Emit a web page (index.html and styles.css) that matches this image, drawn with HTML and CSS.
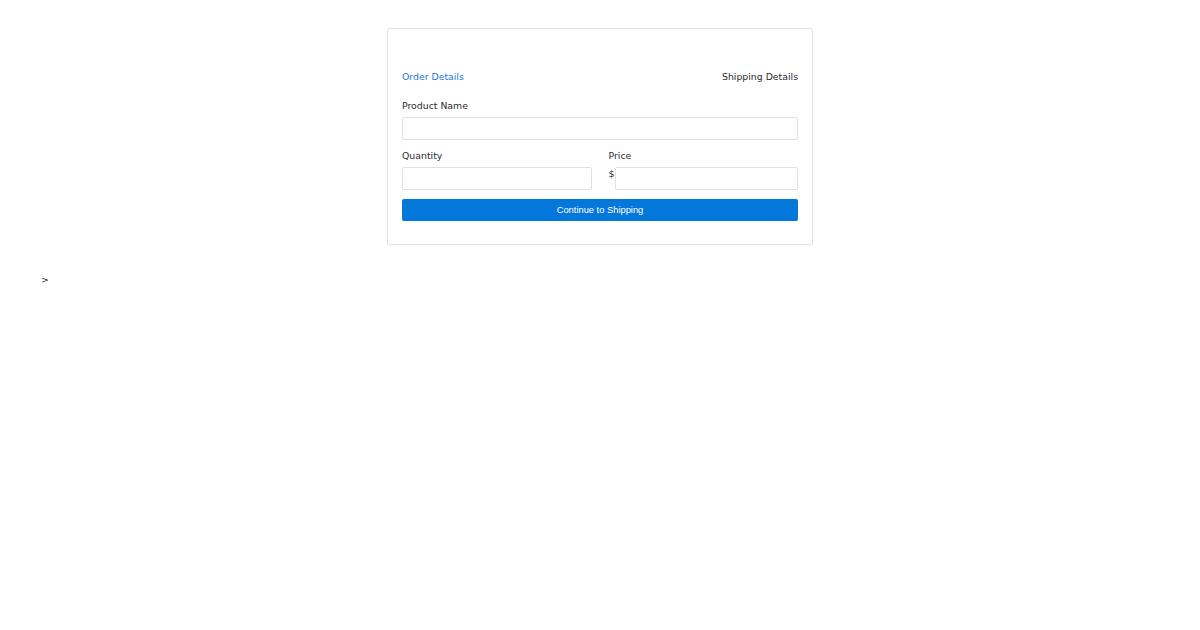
FILE: index.html
```html
<!DOCTYPE html>
<html>
<head>
<meta charset="utf-8">
<link rel="stylesheet" href="styles.css">
</head>
<body>
<div class="page">
  <div class="card">
    <div class="header"></div>
    <div class="tabs">
      <span class="tab active">Order Details</span>
      <span class="tab">Shipping Details</span>
    </div>
    <div class="field">
      <label class="label">Product Name</label>
      <input class="input" type="text">
    </div>
    <div class="row">
      <div class="field col">
        <label class="label">Quantity</label>
        <input class="input" type="text">
      </div>
      <div class="field col">
        <label class="label">Price</label>
        <div class="price">
          <span class="currency">$</span>
          <input class="input" type="text">
        </div>
      </div>
    </div>
    <button class="btn">Continue to Shipping</button>
  </div>
  <div class="tail">&gt;</div>
</div>
</body>
</html>
```
FILE: styles.css
```css
html, body {
  margin: 0;
  padding: 0;
  background: #ffffff;
}
body {
  font-family: "DejaVu Sans", sans-serif;
  font-size: 9.33px;
  line-height: 12px;
  color: #2b2b2b;
}
.page {
  padding-top: 28px;
}
.card {
  box-sizing: border-box;
  width: 426px;
  margin: 0 auto;
  border: 1px solid #e2e2e2;
  border-radius: 2px;
  padding: 14px 14px 23px 14px;
  display: flex;
  flex-direction: column;
}
.header {
  height: 28px;
}
.tabs {
  display: flex;
  justify-content: space-between;
  height: 12px;
  margin-bottom: 17px;
}
.tab.active {
  color: #1a78d6;
}
.field {
  display: flex;
  flex-direction: column;
  margin-bottom: 10px;
}
.row .field {
  margin-bottom: 9px;
}
.label {
  display: block;
  height: 12px;
  margin-bottom: 5px;
}
.input {
  box-sizing: border-box;
  height: 23px;
  width: 100%;
  margin: 0;
  border: 1px solid #e0e0e0;
  border-radius: 2px;
  background: #fff;
  padding: 0 6px;
  font: inherit;
}
.row {
  display: flex;
  gap: 17px;
}
.col {
  flex: 1;
  min-width: 0;
}
.price {
  display: flex;
  align-items: flex-start;
}
.currency {
  width: 6px;
  flex: none;
  line-height: 14px;
}
.price .input {
  flex: 1;
  min-width: 0;
}
.btn {
  box-sizing: border-box;
  height: 22px;
  width: 100%;
  border: none;
  border-radius: 2px;
  background: #0477db;
  color: #ffffff;
  font-family: "Liberation Sans", Arial, sans-serif;
  font-size: 9.33px;
  padding: 0;
  margin: 0;
}
.tail {
  margin-top: 29px;
  padding-left: 41px;
  height: 12px;
}
```
